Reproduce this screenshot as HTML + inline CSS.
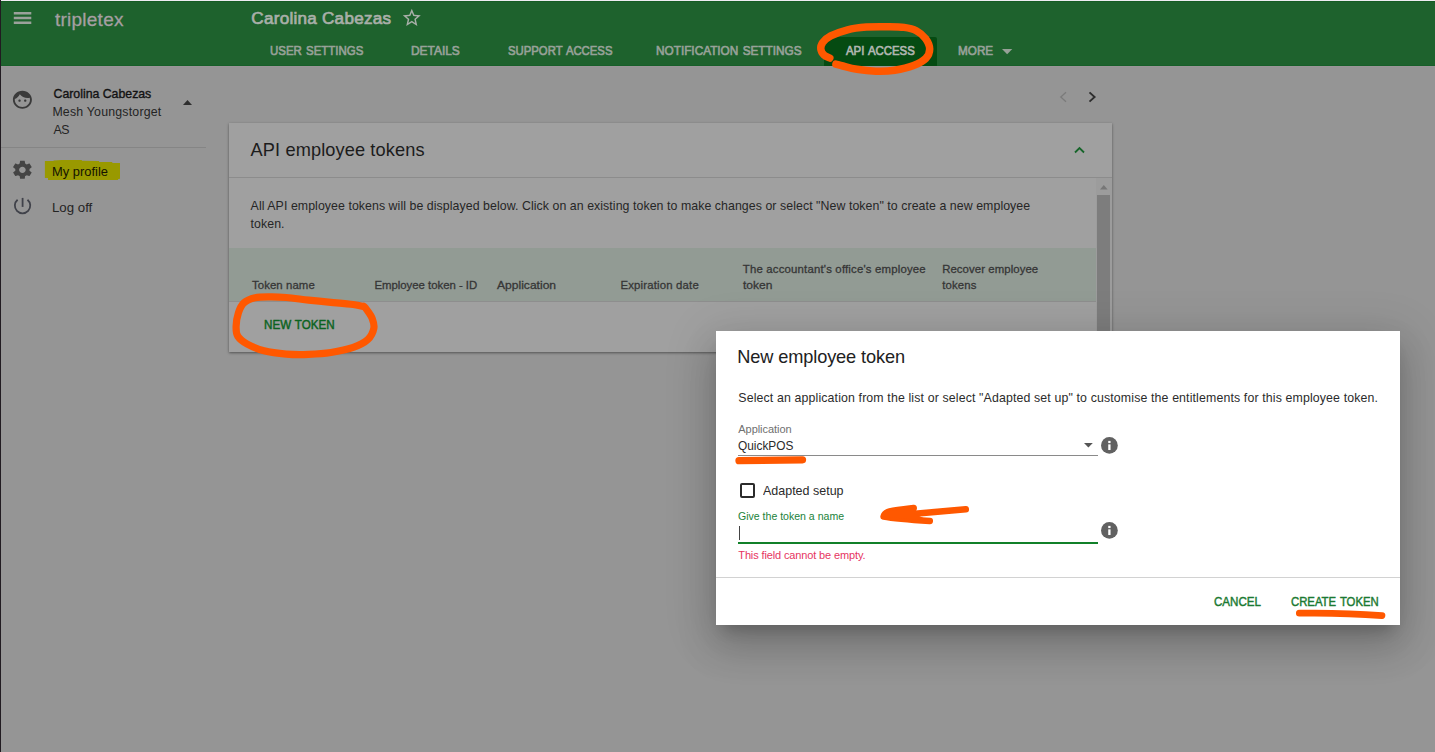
<!DOCTYPE html>
<html lang="en">
<head>
<meta charset="utf-8">
<title>Tripletex - API access</title>
<style>
html,body{margin:0;padding:0;}
body{width:1435px;height:752px;overflow:hidden;position:relative;background:#959595;font-family:"Liberation Sans",sans-serif;color:#1d1d1d;}
.abs{position:absolute;}
.t{position:absolute;white-space:nowrap;line-height:20px;height:20px;transform-origin:0 0;}
.b{font-weight:bold;}
svg{position:absolute;overflow:visible;}
#topline{left:1px;top:0;width:1434px;height:1px;background:#efecf3;}
#leftline{left:0;top:0;width:1px;height:752px;background:#211b21;}
#header{left:1px;top:1px;width:1434px;height:65px;background:#1e622d;}
#activetab{left:824px;top:37px;width:113px;height:29px;background:#054b12;border-radius:2px 2px 0 0;}
.tab{color:#a3aaa4;font-weight:bold;font-size:12px;}
#card{left:229px;top:123px;width:883px;height:229px;background:#a0a0a0;box-shadow:0 1px 2.500px rgba(0,0,0,.45);}
#cardline{left:229px;top:177px;width:883px;height:1px;background:#8c8c8c;}
#thead{left:229px;top:248px;width:867px;height:53px;background:#929b94;}
#theadline{left:229px;top:301px;width:867px;height:1px;background:#8e8e8e;}
.th{font-size:12px;color:#303030;-webkit-text-stroke:0.3px #303030;}
#sbtrack{left:1096px;top:178px;width:16px;height:174px;background:#9c9c9c;}
#sbthumb{left:1097px;top:195px;width:13px;height:157px;background:#7d7d7d;}
#modal{left:716px;top:331px;width:684px;height:294px;background:#fff;box-shadow:0 10.450px 14.250px -6.650px rgba(0,0,0,.2),0 22.800px 36.100px 2.850px rgba(0,0,0,.14),0 8.550px 43.700px 7.600px rgba(0,0,0,.12);}
#mline{left:716px;top:577px;width:684px;height:1px;background:#d2d2d2;}
.g{color:#1b7a2f;}
</style>
</head>
<body>
<div class="abs" id="header"></div>
<div class="abs" id="topline"></div>
<div class="abs" style="left:1px;top:1px;width:1434px;height:1px;background:#165c24;"></div>
<div class="abs" style="left:1px;top:65px;width:1434px;height:1px;background:#175f29;"></div>
<div class="abs" style="left:1px;top:66px;width:1434px;height:1px;background:#9a9698;"></div>
<div class="abs" id="leftline"></div>

<!-- hamburger -->
<svg style="left:0;top:0" width="40" height="30" viewBox="0 0 40 30"><path d="M13.800 12.100h17.500v2.400h-17.500zM13.800 16.750h17.500v2.400h-17.500zM13.800 21.500h17.500v2.400h-17.500z" fill="#9ba19b"/></svg>

<svg style="left:400.8px;top:7.2px" width="21.6" height="21.6" viewBox="0 0 24 24"><path d="M22 9.24l-7.19-.62L12 2 9.190 8.630 2 9.240l5.460 4.730L5.820 21 12 17.270 18.180 21l-1.630-7.030L22 9.240zM12 15.400l-3.760 2.270 1-4.280-3.320-2.880 4.380-.38L12 6.100l1.710 4.040 4.380.38-3.320 2.880 1 4.280L12 15.400z" fill="#a9afa9"/></svg>

<div class="abs" id="activetab"></div>
<svg style="left:1002.400px;top:49.200px" width="10.300" height="5.300" viewBox="0 0 10 5" preserveAspectRatio="none"><path d="M0 0h10L5 5z" fill="#97a198"/></svg>

<!-- sidebar -->
<svg style="left:11.1px;top:89.1px" width="22.8" height="21.6" viewBox="0 0 24 24" preserveAspectRatio="none"><path d="M9 11.750c-.69 0-1.250.56-1.250 1.250s.56 1.250 1.250 1.250 1.250-.56 1.250-1.250-.56-1.250-1.250-1.250zm6 0c-.69 0-1.250.56-1.250 1.250s.56 1.250 1.250 1.250 1.250-.56 1.250-1.250-.56-1.250-1.250-1.250zM12 2C6.480 2 2 6.480 2 12s4.480 10 10 10 10-4.480 10-10S17.520 2 12 2zm0 18c-4.410 0-8-3.590-8-8 0-.29.020-.58.050-.86 2.360-1.050 4.230-2.980 5.210-5.370C11.070 8.330 14.050 10 17.420 10c.78 0 1.530-.09 2.250-.26.210.71.330 1.470.33 2.260 0 4.410-3.590 8-8 8z" fill="#3a3a3a"/></svg>
<svg style="left:183px;top:100px" width="9" height="5" viewBox="0 0 9 5"><path d="M0 5h9L4.500 0z" fill="#2e2e2e"/></svg>
<div class="abs" style="left:1px;top:147px;width:205px;height:1px;background:#858585;"></div>

<svg style="left:11.2px;top:159.2px" width="22.8" height="21.6" viewBox="0 0 24 24" preserveAspectRatio="none"><path d="M19.430 12.980c.04-.32.070-.64.070-.98s-.03-.66-.07-.98l2.110-1.650c.19-.15.240-.42.120-.64l-2-3.460c-.12-.22-.39-.3-.61-.22l-2.490 1c-.52-.4-1.080-.73-1.690-.98l-.38-2.650C14.460 2.180 14.250 2 14 2h-4c-.25 0-.46.180-.49.420l-.38 2.650c-.61.250-1.170.59-1.690.98l-2.490-1c-.23-.09-.49 0-.61.220l-2 3.460c-.13.220-.07.490.12.640l2.110 1.650c-.04.320-.07.650-.07.980s.03.660.07.980l-2.110 1.650c-.19.150-.24.420-.12.640l2 3.460c.12.220.39.300.61.220l2.490-1c.52.400 1.080.73 1.690.98l.38 2.650c.03.240.24.420.49.420h4c.25 0 .46-.18.490-.42l.38-2.650c.61-.25 1.170-.59 1.690-.98l2.490 1c.23.090.49 0 .61-.22l2-3.460c.12-.22.070-.49-.12-.64l-2.110-1.650zM12 15.500c-1.930 0-3.500-1.570-3.500-3.500s1.570-3.500 3.500-3.500 3.500 1.570 3.500 3.500-1.570 3.500-3.500 3.500z" fill="#444444"/></svg>
<svg style="left:0;top:0" width="130" height="190" viewBox="0 0 130 190"><path d="M44.900 161H53.200L54 160.500 62 159.900H81.700L82 160.800 99 161 99.300 161.900 112.100 162 112.500 163H120V178.800L118.100 179V180H48V177.900H44.900Z" fill="#999900"/></svg>

<svg style="left:0;top:0" width="40" height="230" viewBox="0 0 40 230" fill="none" stroke="#40424a" stroke-width="1.8"><path d="M22.600 197.900v9"/><path d="M17.60 199.70A7.7 7.7 0 1 0 27.50 199.70"/></svg>

<!-- pager arrows -->
<svg style="left:0;top:0" width="1435" height="120" viewBox="0 0 1435 120" fill="none"><path d="M1066 92.300L1060.800 97 1066 101.700" stroke="#7b7b7b" stroke-width="1.300"/><path d="M1089.500 92.400L1094.600 97 1089.500 101.600" stroke="#2d2d2d" stroke-width="1.900"/></svg>

<!-- card -->
<div class="abs" id="card"></div>
<div class="abs" id="cardline"></div>
<svg style="left:1074.400px;top:145.700px" width="11" height="8" viewBox="0 0 11 8"><path d="M1 6.500l4.500-4.500 4.500 4.500" stroke="#16652a" stroke-width="1.800" fill="none"/></svg>
<div class="abs" id="thead"></div>
<div class="abs" id="theadline"></div>
<div class="abs" id="sbtrack"></div>
<div class="abs" id="sbthumb"></div>
<svg style="left:1099.900px;top:184.500px" width="7.600" height="4.500" viewBox="0 0 9 5" preserveAspectRatio="none"><path d="M0 5h9L4.500 0z" fill="#777"/></svg>

<!-- modal -->
<div class="abs" id="modal"></div>
<div class="abs" id="mline"></div>
<div class="abs" style="left:738px;top:455px;width:360px;height:1px;background:#8a8a8a;"></div>
<svg style="left:1083.800px;top:442.700px" width="8.800" height="4.500" viewBox="0 0 10 5" preserveAspectRatio="none"><path d="M0 0h10L5 5z" fill="#555"/></svg>
<svg style="left:1101.4px;top:436.7px" width="16.800" height="16.800" viewBox="0 0 16 16"><circle cx="8" cy="8" r="8" fill="#616161"/><rect x="6.900" y="7" width="2.200" height="5.400" fill="#fff"/><rect x="6.900" y="3.700" width="2.200" height="2.100" fill="#fff"/></svg>

<div class="abs" style="left:740px;top:483px;width:11px;height:11px;border:2px solid #2b2b2b;border-radius:2px;"></div>
<div class="abs" style="left:739px;top:526px;width:1px;height:14px;background:#444;"></div>
<div class="abs" style="left:738px;top:542px;width:360px;height:2px;background:#118029;"></div>
<svg style="left:1101.4px;top:522.4px" width="16.800" height="16.800" viewBox="0 0 16 16"><circle cx="8" cy="8" r="8" fill="#616161"/><rect x="6.900" y="7" width="2.200" height="5.400" fill="#fff"/><rect x="6.900" y="3.700" width="2.200" height="2.100" fill="#fff"/></svg>

<div class="t" id="logo" style="left:54.95px;top:9.52px;font-size:19px;color:#a59fa2;letter-spacing:0.247px;-webkit-text-stroke:0.3px #a59fa2;">tripletex</div>
<div class="t" id="title" style="left:251.35px;top:8.87px;font-size:17.1px;color:#a9afa9;letter-spacing:0.252px;-webkit-text-stroke:0.7px #a9afa9;">Carolina Cabezas</div>
<div class="t" id="tab1" style="left:270.09px;top:40.59px;font-size:13.3px;color:#97a198;word-spacing:1.2px;transform:scaleX(0.8617);-webkit-text-stroke:0.7px #97a198;">USER SETTINGS</div>
<div class="t" id="tab2" style="left:411.05px;top:40.59px;font-size:13.3px;color:#97a198;transform:scaleX(0.8961);-webkit-text-stroke:0.7px #97a198;">DETAILS</div>
<div class="t" id="tab3" style="left:507.95px;top:40.59px;font-size:13.3px;color:#97a198;word-spacing:1.2px;transform:scaleX(0.8518);-webkit-text-stroke:0.7px #97a198;">SUPPORT ACCESS</div>
<div class="t" id="tab4" style="left:656.06px;top:40.59px;font-size:13.3px;color:#97a198;word-spacing:1.2px;transform:scaleX(0.8865);-webkit-text-stroke:0.7px #97a198;">NOTIFICATION SETTINGS</div>
<div class="t" id="tab5" style="left:845.85px;top:40.59px;font-size:13.3px;color:#b0b6b1;word-spacing:1.2px;transform:scaleX(0.8566);-webkit-text-stroke:0.7px #b0b6b1;">API ACCESS</div>
<div class="t" id="tab6" style="left:958.37px;top:40.59px;font-size:13.3px;color:#97a198;transform:scaleX(0.8816);-webkit-text-stroke:0.7px #97a198;">MORE</div>
<div class="t" id="sname" style="left:53.57px;top:83.52px;font-size:12.35px;color:#121212;letter-spacing:-0.026px;-webkit-text-stroke:0.35px #121212;">Carolina Cabezas</div>
<div class="t" id="scomp1" style="left:52.40px;top:101.62px;font-size:12.35px;color:#242424;letter-spacing:0.201px;">Mesh Youngstorget</div>
<div class="t" id="scomp2" style="left:53.40px;top:120.32px;font-size:12.35px;color:#242424;letter-spacing:-0.433px;">AS</div>
<div class="t" id="myprof" style="left:52.25px;top:161.62px;font-size:12.35px;color:#141400;transform:scaleX(1.0468);">My profile</div>
<div class="t" id="logoff" style="left:51.93px;top:197.62px;font-size:12.35px;color:#242424;transform:scaleX(1.0729);">Log off</div>
<div class="t" id="cardtitle" style="left:250.60px;top:139.79px;font-size:18.2px;color:#1c1c1c;letter-spacing:0.113px;">API employee tokens</div>
<div class="t" id="desc1" style="left:250.60px;top:196.02px;font-size:12.35px;color:#262626;letter-spacing:0.062px;">All API employee tokens will be displayed below. Click on an existing token to make changes or select "New token" to create a new employee</div>
<div class="t" id="desc2" style="left:250.60px;top:214.12px;font-size:12.35px;color:#262626;letter-spacing:0.062px;">token.</div>
<div class="t" id="th1" style="left:251.95px;top:275.25px;font-size:11.4px;color:#363636;letter-spacing:0.087px;-webkit-text-stroke:0.3px #363636;">Token name</div>
<div class="t" id="th2" style="left:374.45px;top:275.25px;font-size:11.4px;color:#363636;letter-spacing:-0.026px;-webkit-text-stroke:0.3px #363636;">Employee token - ID</div>
<div class="t" id="th3" style="left:497.35px;top:275.25px;font-size:11.4px;color:#363636;transform:scaleX(1.0598);-webkit-text-stroke:0.3px #363636;">Application</div>
<div class="t" id="th4" style="left:620.45px;top:275.25px;font-size:11.4px;color:#363636;letter-spacing:0.168px;-webkit-text-stroke:0.3px #363636;">Expiration date</div>
<div class="t" id="th5" style="left:742.75px;top:259.45px;font-size:11.4px;color:#363636;letter-spacing:0.180px;-webkit-text-stroke:0.3px #363636;">The accountant's office's employee</div>
<div class="t" id="th5b" style="left:742.75px;top:275.25px;font-size:11.4px;color:#363636;transform:scaleX(1.0570);-webkit-text-stroke:0.3px #363636;">token</div>
<div class="t" id="th6" style="left:942.15px;top:259.45px;font-size:11.4px;color:#363636;letter-spacing:0.071px;-webkit-text-stroke:0.3px #363636;">Recover employee</div>
<div class="t" id="th6b" style="left:942.15px;top:275.25px;font-size:11.4px;color:#363636;letter-spacing:0.167px;-webkit-text-stroke:0.3px #363636;">tokens</div>
<div class="t" id="newtoken" style="left:264.38px;top:314.82px;font-size:12.35px;color:#0b6320;word-spacing:0.8px;transform:scaleX(0.9406);-webkit-text-stroke:0.45px #0b6320;">NEW TOKEN</div>
<div class="t" id="mtitle" style="left:737.30px;top:346.79px;font-size:18.2px;color:#212121;letter-spacing:-0.125px;">New employee token</div>
<div class="t" id="mdesc" style="left:738.30px;top:388.02px;font-size:12.35px;color:#2b2b2b;letter-spacing:0.133px;">Select an application from the list or select "Adapted set up" to customise the entitlements for this employee token.</div>
<div class="t" id="lblapp" style="left:738.30px;top:419.09px;font-size:11.0px;color:#707070;letter-spacing:-0.050px;">Application</div>
<div class="t" id="valapp" style="left:738.30px;top:435.62px;font-size:12.35px;color:#2b2b2b;transform:scaleX(0.9619);">QuickPOS</div>
<div class="t" id="adapted" style="left:762.70px;top:480.60px;font-size:13.0px;color:#2b2b2b;transform:scaleX(0.9603);">Adapted setup</div>
<div class="t" id="lblname" style="left:738.30px;top:506.39px;font-size:11.0px;color:#21823a;transform:scaleX(0.9579);">Give the token a name</div>
<div class="t" id="err" style="left:738.30px;top:545.29px;font-size:11.0px;color:#e6355f;letter-spacing:-0.130px;">This field cannot be empty.</div>
<div class="t" id="cancel" style="left:1213.82px;top:591.80px;font-size:13.0px;color:#1b7a32;transform:scaleX(0.8904);-webkit-text-stroke:0.45px #1b7a32;">CANCEL</div>
<div class="t" id="create" style="left:1290.62px;top:591.80px;font-size:13.0px;color:#1b7a32;word-spacing:1.0px;transform:scaleX(0.8708);-webkit-text-stroke:0.45px #1b7a32;">CREATE TOKEN</div>
<!-- annotations -->
<svg id="ann" style="left:0;top:0" width="1435" height="752" viewBox="0 0 1435 752" fill="none" stroke="#ff5800" stroke-linecap="round" stroke-linejoin="round">
<path d="M829.8 58.0C828.8 57.5 825.6 56.7 824.1 55.2C822.6 53.7 821.0 51.1 820.8 49.0C820.6 46.9 821.1 44.7 822.7 42.5C824.4 40.3 826.6 38.0 830.7 35.9C834.9 33.8 841.7 31.3 847.6 29.8C853.5 28.3 860.1 27.6 866.4 27.1C872.7 26.6 879.0 26.6 885.3 26.7C891.6 26.8 898.9 26.7 904.1 27.4C909.3 28.1 912.7 28.8 916.3 30.7C919.9 32.6 923.5 35.7 925.7 38.7C927.9 41.8 929.7 45.7 929.7 49.0C929.7 52.3 928.4 55.8 925.7 58.5C923.0 61.2 918.7 63.5 913.5 65.5C908.3 67.5 901.0 69.2 894.7 70.2C888.4 71.2 882.2 71.4 875.9 71.2C869.6 71.0 862.5 70.2 857.0 69.3C851.5 68.4 846.4 66.9 842.9 66.0C839.4 65.1 837.1 64.4 835.9 64.1" stroke-width="7.500"/>
<path d="M363.8 306.7C362.0 306.3 358.7 305.2 353.2 304.5C347.7 303.8 338.3 303.0 330.9 302.3C323.5 301.6 316.0 300.9 308.6 300.1C301.2 299.3 292.8 298.0 286.3 297.5C279.8 297.0 274.8 296.8 269.6 296.9C264.4 296.9 259.4 296.8 255.1 297.8C250.8 298.8 246.8 300.3 244.0 302.8C241.2 305.3 239.7 309.0 238.4 312.9C237.1 316.8 236.2 322.4 236.1 326.3C236.0 330.2 235.9 333.3 237.8 336.3C239.7 339.3 242.9 341.7 247.3 344.1C251.7 346.5 257.5 349.1 264.0 350.8C270.5 352.5 278.9 353.5 286.3 354.1C293.7 354.7 301.2 354.7 308.6 354.4C316.0 354.1 323.5 353.7 330.9 352.5C338.3 351.3 347.1 349.5 353.2 347.4C359.3 345.2 364.3 342.8 367.7 339.6C371.1 336.5 373.1 332.0 373.8 328.5C374.6 325.0 373.4 321.6 372.2 318.4C371.0 315.2 368.0 311.5 366.6 309.5C365.2 307.5 364.3 306.8 363.8 306.2" stroke-width="7.200"/>
<path d="M739 460.600L802.500 459.800" stroke-width="7.300"/>
<path d="M1299.300 613.200C1325 612.800 1355 613.500 1382 615.600" stroke-width="6.700"/>
<path d="M965.800 509.300L883.800 516.400M913.700 508C903 509.500 892 510 888 512S884 515 883.600 516.500C892 518 915 520 929.800 521" stroke-width="6.500"/>
<path d="M913.700 508L888 511L883.600 516.500L929.800 521L915 514Z" fill="#ff5800" stroke="none"/>
</svg>
</body>
</html>
